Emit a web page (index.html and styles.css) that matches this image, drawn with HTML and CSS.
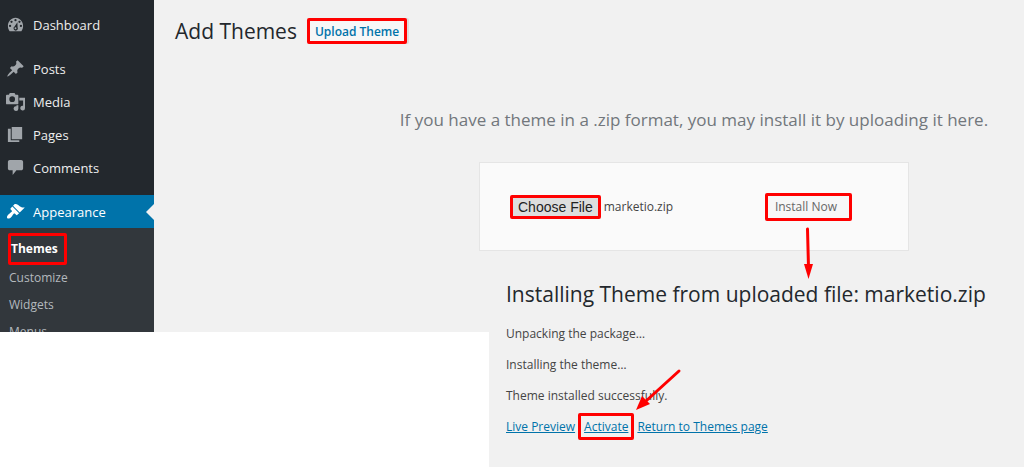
FILE: index.html
```html
<!DOCTYPE html>
<html lang="en">
<head>
    <meta charset="UTF-8">
    <meta name="viewport" content="width=device-width, initial-scale=1.0">
    <title>Add Themes</title>
    <link rel="stylesheet" href="styles.css">
</head>
<body>
    <div class="page">
        <nav class="sidebar">
            <ul class="menu">
                <li><a href="#">
                    <svg class="icon" viewBox="0 0 20 20"><path fill-rule="evenodd" d="M3.8 17h12.4c1.1-1.500 1.800-3.400 1.800-5.400C18 7 14.400 3 10 3S2 7 2 11.600c0 2 .7 3.900 1.800 5.400zM10 4.200a1.200 1.200 0 1 1 0 2.400 1.200 1.200 0 0 1 0-2.400zM5.800 6a1.200 1.200 0 1 1 0 2.400 1.200 1.200 0 0 1 0-2.400zM14.200 6a1.200 1.200 0 1 1 0 2.400 1.200 1.200 0 0 1 0-2.400zM4.300 10.300a1.200 1.200 0 1 1 0 2.400 1.200 1.200 0 0 1 0-2.400zM15.700 10.300a1.200 1.200 0 1 1 0 2.400 1.200 1.200 0 0 1 0-2.400zM12 7.500l.2 5.500a2.300 2.300 0 1 1-3.200-.8zM10 13a1 1 0 1 0 0 2 1 1 0 0 0 0-2z"/></svg>
                    Dashboard</a></li>
                <li class="separator"></li>
                <li><a href="#">
                    <svg class="icon" viewBox="0 0 20 20"><path d="M10.440 3.020l1.820-1.820 6.360 6.350-1.830 1.820c-1.050-.68-2.480-.57-3.410.36l-.75.750c-.92.930-1.040 2.350-.35 3.410l-1.830 1.820-2.410-2.410-2.800 2.790c-.42.420-3.380 2.710-3.800 2.290s1.860-3.390 2.280-3.810l2.790-2.790L4.100 9.360l1.830-1.820c1.050.69 2.480.57 3.400-.36l.75-.75c.93-.92 1.050-2.350.36-3.410z"/></svg>
                    Posts</a></li>
                <li><a href="#">
                    <svg class="icon" viewBox="0 0 20 20"><path fill-rule="evenodd" d="M1 3h2l1-2h5l1 2h2c.6 0 1 .4 1 1v8c0 .6-.4 1-1 1H1c-.6 0-1-.4-1-1V4c0-.6.400-1 1-1zM6.500 4.500a3 3 0 1 0 0 6 3 3 0 0 0 0-6z"/><path d="M14 6h6v11a2.500 2.500 0 1 1-2-2.500V9h-4zM13 14v3.500a2.500 2.500 0 1 1-2-2.500v-1z"/></svg>
                    Media</a></li>
                <li><a href="#">
                    <svg class="icon" viewBox="0 0 20 20"><path d="M6 15V2h11v13zM5 16h9v2H2V4h3z"/></svg>
                    Pages</a></li>
                <li><a href="#">
                    <svg class="icon" viewBox="0 0 20 20"><path d="M4 2h12c1.100 0 2 .9 2 2v7c0 1.100-.9 2-2 2h-5l-4 5v-5H4c-1.100 0-2-.9-2-2V4c0-1.100.9-2 2-2z"/></svg>
                    Comments</a></li>
                <li class="separator"></li>
                <li class="current"><a href="#">
                    <svg class="icon" viewBox="0 0 20 20"><path d="M14.480 11.060L7.410 3.990l1.500-1.500c.5-.56 2.300-.47 3.510.32 1.210.8 1.430 1.280 2.910 2.100 1.180.64 2.450 1.260 4.450.85zM13.770 11.770L6.700 4.700 4.930 6.470c-.39.390-.39 1.020 0 1.410l1.060 1.060c.39.390.39 1.030 0 1.420-.6.600-1.430 1.110-2.210 1.690-.35.260-.7.530-1.010.84C1.430 14.230.4 16.080 1.400 17.070c.99 1 2.840-.03 4.180-1.360.31-.31.580-.66.850-1.020.57-.78 1.080-1.610 1.690-2.210.39-.39 1.020-.39 1.410 0l1.060 1.060c.39.390 1.020.39 1.410 0z"/></svg>
                    Appearance</a></li>
            </ul>
            <ul class="submenu">
                <li><a class="active highlight" href="#">Themes</a></li>
                <li><a href="#">Customize</a></li>
                <li><a href="#">Widgets</a></li>
                <li><a href="#">Menus</a></li>
            </ul>
        </nav>

        <main class="content">
            <header class="heading">
                <h1>Add Themes</h1>
                <button type="button" class="upload-button highlight">Upload Theme</button>
            </header>
            <section class="upload">
                <p class="upload-help">If you have a theme in a .zip format, you may install it by uploading it here.</p>
                <form class="upload-form">
                    <div class="file-field">
                        <input type="file" id="theme-zip" aria-label="Theme zip file" hidden>
                        <button type="button" id="choose-file" class="choose-file highlight">Choose File</button>
                        <span id="file-name">marketio.zip</span>
                    </div>
                    <button type="button" class="install-button highlight">Install Now</button>
                    <svg class="arrow arrow-down" viewBox="0 0 12 54"><path d="M4.500 2l1 38" stroke="#f00" stroke-width="3" stroke-linecap="round"/><path d="M1 37h9L5.500 52z" fill="#f00"/></svg>
                </form>
            </section>
        </main>

        <section class="result">
            <h2>Installing Theme from uploaded file: marketio.zip</h2>
            <p>Unpacking the package…</p>
            <p>Installing the theme…</p>
            <p>Theme installed successfully.</p>
            <div class="actions">
                <a href="#">Live Preview</a>
                <a class="activate highlight" href="#">Activate</a>
                <a href="#">Return to Themes page</a>
                <svg class="arrow arrow-diagonal" viewBox="0 0 48 44"><path d="M44 3L11 33" stroke="#f00" stroke-width="3" stroke-linecap="round"/><path d="M1 42l6-14 8 8z" fill="#f00"/></svg>
            </div>
        </section>
    </div>

    <script>
    const themeZip = document.getElementById('theme-zip');
    const fileName = document.getElementById('file-name');

    document.getElementById('choose-file').addEventListener('click', () => themeZip.click());

    themeZip.addEventListener('change', () => {
        if (themeZip.files.length) {
            fileName.textContent = themeZip.files[0].name;
        }
    });
    </script>
</body>
</html>
```
FILE: styles.css
```css
* {
    box-sizing: border-box;
}

body {
    margin: 0;
    font-family: "Open Sans", "Noto Sans", sans-serif;
    font-size: 12px;
    color: #444;
    background-color: #fff;
}

h1, h2, p, ul {
    margin: 0;
    padding: 0;
    font-weight: normal;
}

ul {
    list-style: none;
}

button {
    font-family: inherit;
    cursor: pointer;
}

.page {
    display: grid;
    grid-template-columns: 154px 335px 1fr;
    grid-template-rows: 275px 57px 1fr;
    min-height: 100vh;
}

.highlight {
    border: 3px solid #f00;
    border-radius: 2px;
}

/* Sidebar */
.sidebar {
    grid-column: 1;
    grid-row: 1 / 3;
    display: flex;
    flex-direction: column;
    overflow: hidden;
    background-color: #23282d;
}

.menu {
    padding-top: 8px;
}

.menu a {
    display: flex;
    align-items: center;
    gap: 8px;
    height: 33px;
    padding-left: 6px;
    font-size: 13px;
    color: #eee;
    text-decoration: none;
}

.separator {
    height: 11px;
}

.icon {
    width: 19px;
    height: 19px;
    fill: #a0a5aa;
}

.menu .current {
    position: relative;
    background-color: #0073aa;
}

.current a {
    color: #fff;
}

.current .icon {
    fill: #fff;
}

.current::after {
    content: "";
    position: absolute;
    top: 9px;
    right: 0;
    border: 8px solid transparent;
    border-left: 0;
    border-right-color: #f1f1f1;
}

.submenu {
    flex: 1 0 auto;
    padding-top: 5px;
    background-color: #32373c;
}

.submenu li {
    display: flex;
    align-items: center;
    height: 27px;
    padding-left: 9px;
}

.submenu li:first-child {
    height: 31px;
    padding-left: 8px;
}

.submenu a {
    color: #b4b9be;
    text-decoration: none;
}

.submenu .active {
    width: 59px;
    line-height: 26px;
    font-weight: bold;
    color: #fff;
}

/* Add themes */
.content {
    grid-column: 2 / 4;
    grid-row: 1 / 3;
    padding: 17px 0 0 21px;
    background-color: #f1f1f1;
}

.heading {
    display: flex;
    align-items: center;
    gap: 10px;
}

h1, h2 {
    font-size: 21px;
    line-height: 28px;
    color: #23282d;
}

.upload-button {
    height: 26px;
    padding: 0 5px;
    font-size: 12px;
    font-weight: 600;
    color: #0073aa;
    background-color: #f7f7f7;
    box-shadow: 2px 0 0 #ddd;
}

.upload {
    display: flex;
    flex-direction: column;
    align-items: center;
    gap: 30px;
    padding: 62px 0 0 189px;
}

.upload-help {
    font-size: 17px;
    line-height: 25px;
    color: #72777c;
}

.upload-form {
    position: relative;
    display: flex;
    align-items: center;
    justify-content: space-between;
    width: 430px;
    height: 89px;
    padding: 0 56px 0 30px;
    border: 1px solid #e5e5e5;
    background-color: #fafafa;
}

.file-field {
    display: flex;
    align-items: center;
    gap: 3px;
}

.choose-file {
    height: 24px;
    padding: 0 5px;
    font-family: "Liberation Sans", Arial, sans-serif;
    font-size: 14px;
    color: #222;
    background-color: #ddd;
}

.install-button {
    height: 28px;
    padding: 0 12px 0 7px;
    font-size: 12px;
    color: #666;
    background-color: #f7f7f7;
}

.arrow {
    position: absolute;
    fill: none;
}

.arrow-down {
    top: 64px;
    right: 93px;
    width: 12px;
    height: 54px;
}

/* Install result */
.result {
    grid-column: 3;
    grid-row: 2 / 4;
    padding: 5px 0 20px 17px;
    background-color: #f1f1f1;
}

.result h2 {
    margin-bottom: 17px;
}

.result p {
    margin-bottom: 13px;
    line-height: 18px;
}

.result .actions {
    position: relative;
    display: flex;
    align-items: center;
    gap: 3px;
    margin-top: -5px;
}

.actions a {
    color: #0073aa;
}

.activate {
    padding: 2px 3px;
}

.arrow-diagonal {
    top: -45px;
    left: 129px;
    width: 48px;
    height: 44px;
}
```
